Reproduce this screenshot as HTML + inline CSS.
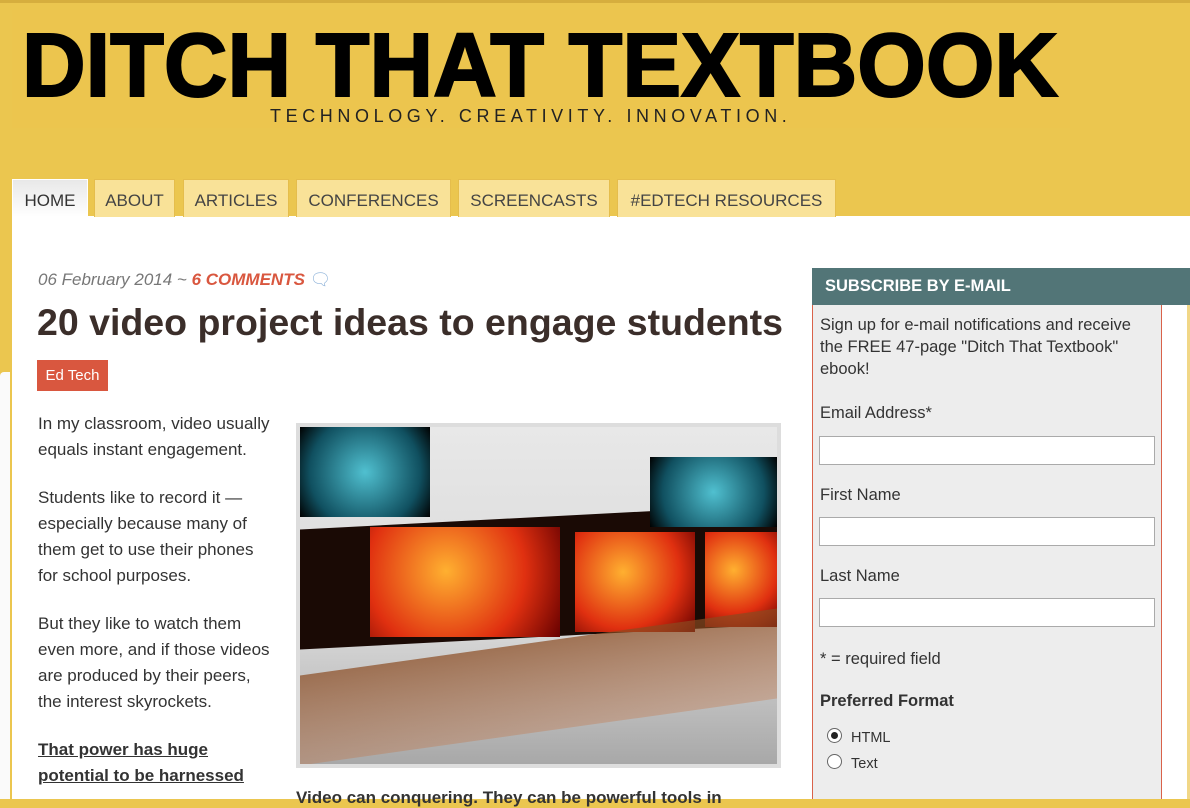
<!DOCTYPE html>
<html><head><meta charset="utf-8"><style>
*{margin:0;padding:0;box-sizing:border-box}
body{width:1190px;height:799px;overflow:hidden;background:#ebc64f;font-family:"Liberation Sans",Arial,sans-serif;position:relative}
.abs{position:absolute}
.logo{left:12px;top:10px;width:1058px;height:118px;background:#ecc54e}
.logo .s{position:absolute;left:258px;top:96px;font:18px "Liberation Sans",sans-serif;letter-spacing:4.6px;color:#222;white-space:nowrap}
.tab{position:absolute;top:179px;height:38px;background:#f9e298;border:1px solid #e5bd4c;border-bottom:none;font-size:17px;color:#444;text-align:center;line-height:42px;white-space:nowrap;overflow:hidden}
.main{left:12px;top:216px;width:1178px;height:583px;background:#fff}
p.b{font-size:17px;line-height:26px;color:#333}
.side{left:812px;top:305px;width:350px;height:494px;background:#ededed;border:1px solid #d9624a;border-top:none;border-bottom:none}
.side .l{position:absolute;left:7px;font-size:16.5px;color:#333;white-space:nowrap}
.inp{position:absolute;left:6px;width:336px;height:29px;background:#fff;border:1px solid #aaa}
</style></head><body>
<div class="abs" style="left:0;top:0;width:1190px;height:3px;background:#d6ae3e"></div>
<div class="abs logo">
<svg width="1058" height="100" style="position:absolute;left:0;top:0"><text x="10" y="86" textLength="1036" lengthAdjust="spacingAndGlyphs" font-family="Liberation Sans" font-weight="900" font-size="90" fill="#000" stroke="#000" stroke-width="2">DITCH THAT TEXTBOOK</text></svg>
<div class="s">TECHNOLOGY. CREATIVITY. INNOVATION.</div></div>
<div class="abs main"></div>
<div class="abs" style="left:0;top:372px;width:10px;height:427px;background:#fafafa;border-radius:4px 0 0 0"></div>
<div class="tab" style="left:12px;width:76px;background:linear-gradient(#e8e8e8,#fff);border-color:#fff;color:#333">HOME</div>
<div class="tab" style="left:94px;width:81px">ABOUT</div>
<div class="tab" style="left:183px;width:106px">ARTICLES</div>
<div class="tab" style="left:296px;width:155px">CONFERENCES</div>
<div class="tab" style="left:458px;width:152px">SCREENCASTS</div>
<div class="tab" style="left:617px;width:219px">#EDTECH RESOURCES</div>

<div class="abs" style="left:38px;top:270px;font-size:17px;font-style:italic;color:#777;white-space:nowrap">06 February 2014 ~ <b style="color:#d9573f">6 COMMENTS</b> <span style="color:#8ab0d8;font-style:normal">&#128488;</span></div>
<div class="abs" style="left:37px;top:301px;font-size:37.5px;font-weight:bold;color:#3b2e2a;white-space:nowrap">20 video project ideas to engage students</div>
<div class="abs" style="left:37px;top:360px;width:71px;height:31px;background:#d9573f;color:#fff;font-size:15px;line-height:31px;text-align:center">Ed Tech</div>
<div class="abs" style="left:38px;top:411px;width:260px;white-space:nowrap">
<p class="b">In my classroom, video usually<br>equals instant engagement.</p>
<p class="b" style="margin-top:22px">Students like to record it —<br>especially because many of<br>them get to use their phones<br>for school purposes.</p>
<p class="b" style="margin-top:22px">But they like to watch them<br>even more, and if those videos<br>are produced by their peers,<br>the interest skyrockets.</p>
<p class="b" style="margin-top:22px;font-weight:bold;text-decoration:underline">That power has huge<br>potential to be harnessed</p>
</div>
<div class="abs" style="left:296px;top:423px;width:485px;height:345px;background:#ddd;padding:4px">
<div style="width:100%;height:100%;background:linear-gradient(180deg,#e8e8e8 0%,#d8d8d8 60%,#a8a8a8 100%);position:relative;overflow:hidden">
<div class="abs" style="left:0;top:90px;width:477px;height:120px;background:#1a0a05;transform:skewY(-3deg)"></div>
<div class="abs" style="left:70px;top:100px;width:190px;height:110px;background:radial-gradient(circle at 40% 40%,#ffb030,#e03010 60%,#600 100%)"></div>
<div class="abs" style="left:275px;top:105px;width:120px;height:100px;background:radial-gradient(circle at 40% 40%,#ffb030,#e03010 60%,#600 100%)"></div>
<div class="abs" style="left:405px;top:105px;width:72px;height:95px;background:radial-gradient(circle at 40% 40%,#ffb030,#e03010 60%,#600 100%)"></div>
<div class="abs" style="left:0;top:0;width:130px;height:90px;background:radial-gradient(circle,#50c0d0,#105060 70%,#000)"></div>
<div class="abs" style="left:350px;top:30px;width:127px;height:70px;background:radial-gradient(circle,#50c0d0,#105060 70%,#000)"></div>
<div class="abs" style="left:0;top:215px;width:477px;height:90px;background:linear-gradient(#8a4a20,rgba(200,100,40,.4));opacity:.7;transform:skewY(-8deg)"></div>
</div></div>
<div class="abs" style="left:296px;top:788px;font-size:17px;font-weight:bold;color:#333;white-space:nowrap">Video can conquering. They can be powerful tools in</div>

<div class="abs" style="left:812px;top:268px;width:378px;height:37px;background:#527577;color:#fff;font-weight:bold;font-size:16.5px;line-height:37px;padding-left:13px">SUBSCRIBE BY E-MAIL</div>
<div class="abs" style="left:1187px;top:305px;width:3px;height:494px;background:#f1d787"></div>
<div class="abs side">
<div class="l" style="top:9px;line-height:22px">Sign up for e-mail notifications and receive<br>the FREE 47-page "Ditch That Textbook"<br>ebook!</div>
<div class="l" style="top:99px">Email Address*</div>
<div class="inp" style="top:131px"></div>
<div class="l" style="top:181px">First Name</div>
<div class="inp" style="top:212px"></div>
<div class="l" style="top:262px">Last Name</div>
<div class="inp" style="top:293px"></div>
<div class="l" style="top:345px">* = required field</div>
<div class="l" style="top:387px;font-weight:bold">Preferred Format</div>
<div class="abs" style="left:14px;top:423px;width:15px;height:15px;border:1px solid #666;border-radius:50%;background:#fff"><div style="margin:3px;width:7px;height:7px;border-radius:50%;background:#222"></div></div>
<div class="l" style="left:38px;top:425px;font-size:14.5px">HTML</div>
<div class="abs" style="left:14px;top:449px;width:15px;height:15px;border:1px solid #666;border-radius:50%;background:#fff"></div>
<div class="l" style="left:38px;top:451px;font-size:14.5px">Text</div>
</div>
</body></html>
